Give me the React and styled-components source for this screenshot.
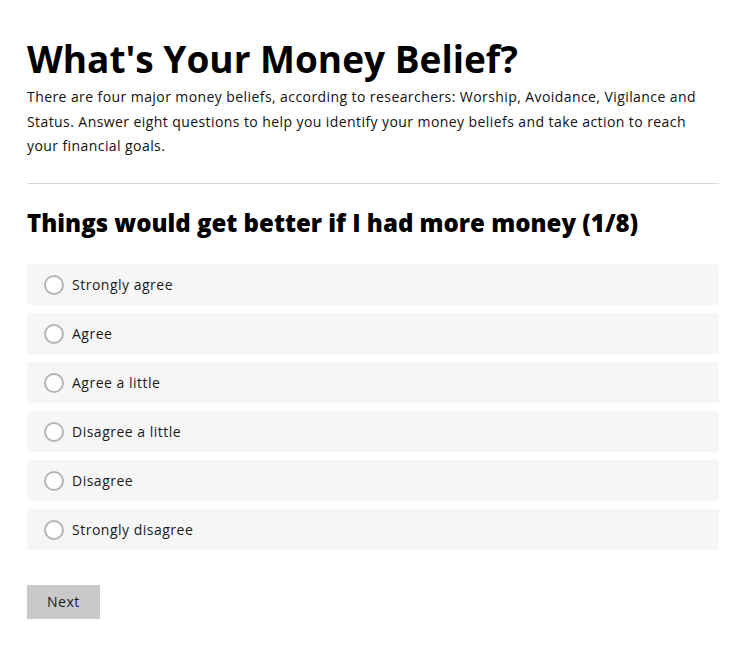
import React, { useState } from 'react';
import styled, { createGlobalStyle } from 'styled-components';

const GlobalStyle = createGlobalStyle`
  body {
    margin: 0;
    background: #ffffff;
    font-family: "Open Sans", "DejaVu Sans", sans-serif;
    color: #1a1a1a;
  }
`;

const Page = styled.div`
  width: 692px;
  padding: 37px 30px 40px 27px;
`;

const Title = styled.h1`
  margin: 0;
  font-size: 37px;
  line-height: 44px;
  font-weight: 700;
  color: #000;
`;

const Intro = styled.p`
  margin: 4px 0 0;
  font-size: 14px;
  line-height: 24.5px;
  letter-spacing: 0.42px;
  color: #111;
`;

const Divider = styled.hr`
  margin: 24px 0 0;
  border: none;
  border-top: 1px solid #d8d8d8;
`;

const Question = styled.h2`
  margin: 23px 0 0;
  font-size: 24px;
  line-height: 32px;
  font-weight: 800;
  color: #000;
`;

const Options = styled.div`
  display: flex;
  flex-direction: column;
  gap: 8px;
  margin-top: 25px;
`;

const Option = styled.label`
  display: flex;
  align-items: center;
  gap: 8px;
  height: 41px;
  padding: 0 17px;
  background: #f6f6f6;
  border-radius: 3px;
  font-size: 14px;
  letter-spacing: 0.5px;
  color: #1a1a1a;
  cursor: pointer;
`;

const Radio = styled.span`
  box-sizing: border-box;
  width: 20px;
  height: 20px;
  margin-top: 2px;
  border-radius: 50%;
  border: 2px solid ${props => (props.checked ? '#333' : '#b5b5b5')};
  background: #fff;
  flex-shrink: 0;
`;

const NextButton = styled.button`
  margin-top: 35px;
  padding: 0 20px;
  height: 34px;
  border: none;
  background: #c9c9c9;
  font-family: inherit;
  font-size: 14px;
  letter-spacing: 0.5px;
  color: #1a1a1a;
  cursor: pointer;
`;

const answers = [
  'Strongly agree',
  'Agree',
  'Agree a little',
  'Disagree a little',
  'Disagree',
  'Strongly disagree',
];

export default function App() {
  const [selected, setSelected] = useState(null);

  return (
    <Page>
      <GlobalStyle />
      <Title>What's Your Money Belief?</Title>
      <Intro>
        There are four major money beliefs, according to researchers: Worship, Avoidance, Vigilance and
        Status. Answer eight questions to help you identify your money beliefs and take action to reach
        your financial goals.
      </Intro>
      <Divider />
      <Question>Things would get better if I had more money (1/8)</Question>
      <Options>
        {answers.map((answer, i) => (
          <Option key={answer} onClick={() => setSelected(i)}>
            <Radio checked={selected === i} />
            {answer}
          </Option>
        ))}
      </Options>
      <NextButton>Next</NextButton>
    </Page>
  );
}
